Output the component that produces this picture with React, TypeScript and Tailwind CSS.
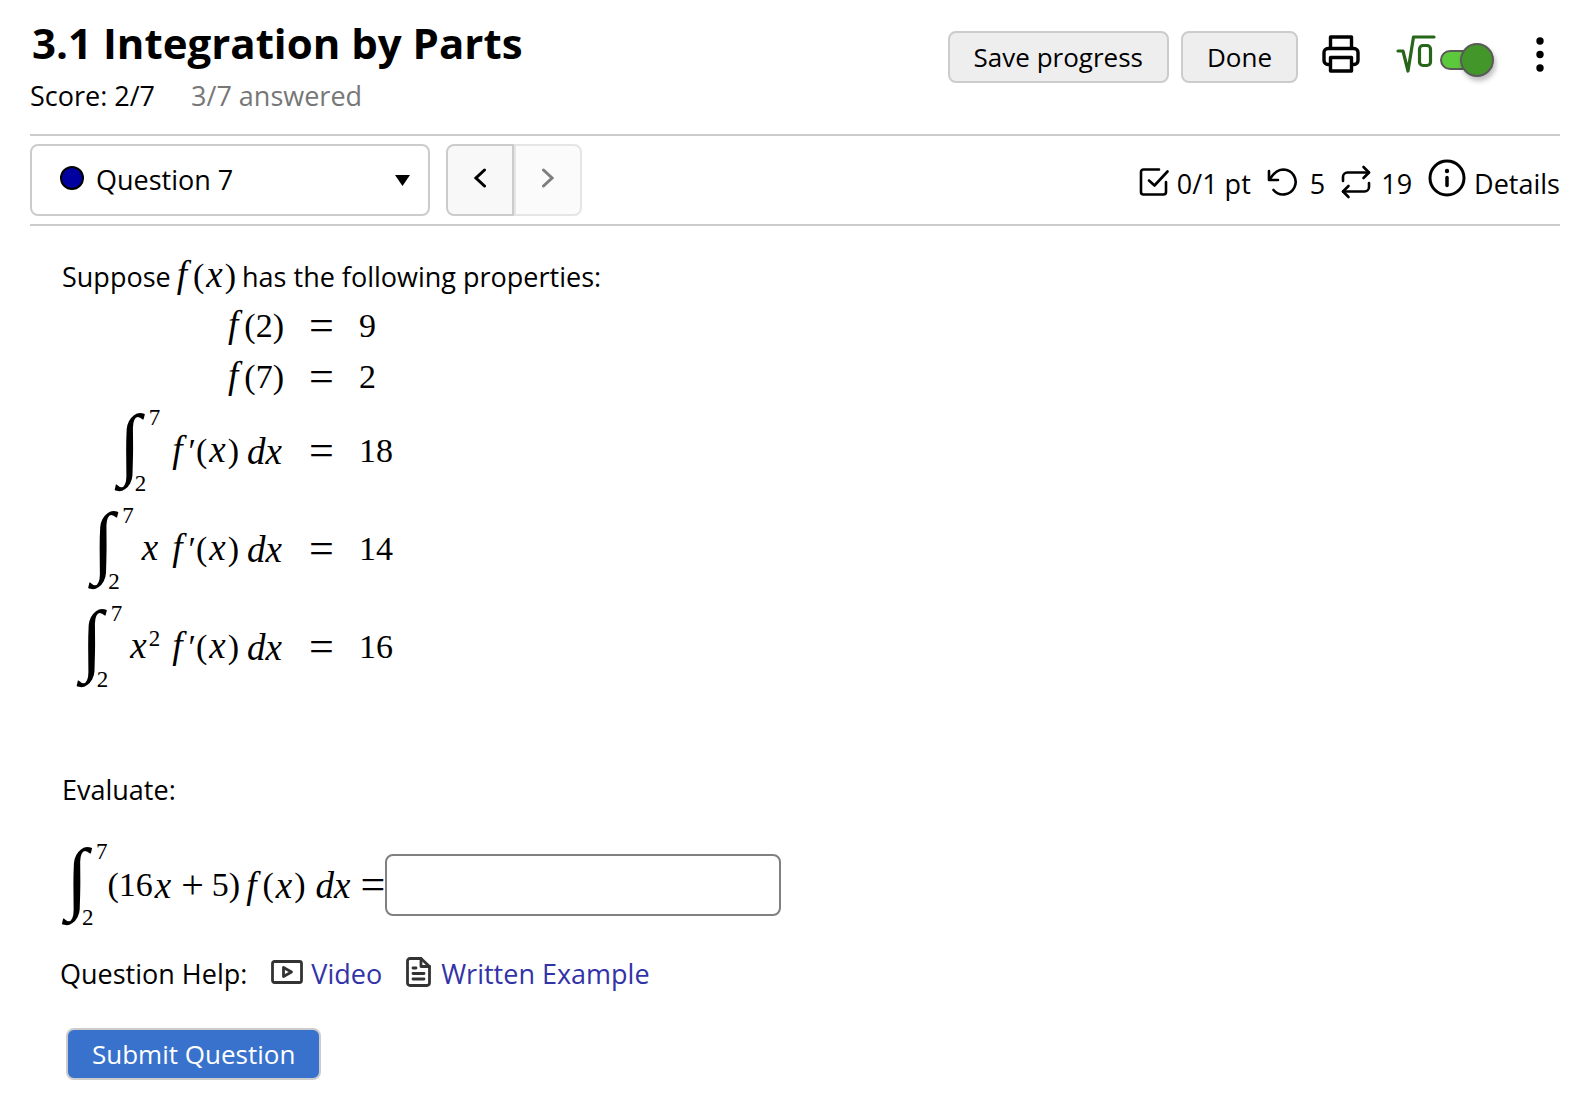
import React, { useState } from "react";

const EQUATIONS = [
  { id: "f2", at: "2", value: "9" },
  { id: "f7", at: "7", value: "2" },
  { id: "int0", factor: "", value: "18" },
  { id: "int1", factor: "x", value: "14" },
  { id: "int2", factor: "x", power: "2", value: "16" },
];

const V = ({ children }: { children: React.ReactNode }) => (
  <i className="px-0.5 text-[37px] leading-none italic">{children}</i>
);

const F = () => <i className="px-1.5 text-[37px] leading-none italic">f</i>;

function Integral({ from, to }: { from: string; to: string }) {
  return (
    <span className="inline-flex h-[90px] items-stretch">
      <span className="w-4 text-[80px] leading-[74px] italic">∫</span>
      <span className="flex flex-col justify-between text-[23px] leading-6">
        <span className="pl-3.5">{to}</span>
        <span>{from}</span>
      </span>
    </span>
  );
}

function PrinterIcon() {
  return (
    <svg width="38" height="38" viewBox="0 0 38 38" fill="none" stroke="currentColor" strokeWidth="3.400" strokeLinejoin="round">
      <path d="M8.500 13.500V2h21v11.500" />
      <path d="M8.500 29.500H6a4 4 0 0 1-4-4v-8a4 4 0 0 1 4-4h26a4 4 0 0 1 4 4v8a4 4 0 0 1-4 4h-2.500" />
      <path d="M8.500 22.500h21V36h-21z" />
    </svg>
  );
}

function RootIcon() {
  return (
    <svg width="40" height="38" viewBox="0 0 40 38" fill="none" stroke="#27661a" strokeWidth="3.200" strokeLinecap="round" strokeLinejoin="round">
      <path d="M2 16h5l5 20 5.500-34H38" />
      <rect x="23.500" y="10.500" width="11" height="20" rx="3.500" />
    </svg>
  );
}

function CheckIcon() {
  return (
    <svg width="30" height="30" viewBox="0 0 30 30" fill="none" stroke="currentColor" strokeWidth="2.600" strokeLinecap="round" strokeLinejoin="round">
      <path d="M20 2.500H4.500A2.500 2.500 0 0 0 2 5v20a2.500 2.500 0 0 0 2.500 2.500h20A2.500 2.500 0 0 0 27 25V15" />
      <path d="M10 13.500l5.500 5L28.500 4.500" />
    </svg>
  );
}

function UndoIcon() {
  return (
    <svg width="31" height="30" viewBox="0 0 31 30" fill="none" stroke="currentColor" strokeWidth="2.600" strokeLinecap="round" strokeLinejoin="round">
      <path d="M2 4v9h9" />
      <path d="M2.500 12.500C6 7 10 2.500 16.500 2.500A12.500 12.500 0 1 1 6.500 23" />
    </svg>
  );
}

function RepeatIcon() {
  return (
    <svg width="30" height="34" viewBox="0 0 30 34" fill="none" stroke="currentColor" strokeWidth="2.600" strokeLinecap="round" strokeLinejoin="round">
      <path d="M2 16v-4a4.500 4.500 0 0 1 4.500-4.500H28" />
      <path d="M22.500 2L28 7.500 22.500 13" />
      <path d="M28 18v4a4.500 4.500 0 0 1-4.500 4.500H2" />
      <path d="M7.500 21L2 26.500 7.500 32" />
    </svg>
  );
}

function InfoIcon() {
  return (
    <svg width="38" height="38" viewBox="0 0 38 38" fill="none" stroke="currentColor" strokeWidth="3" strokeLinecap="round">
      <circle cx="19" cy="19" r="17" />
      <path d="M19 18.500v8" strokeWidth="3.500" />
      <circle cx="19" cy="12" r="2.200" fill="currentColor" stroke="none" />
    </svg>
  );
}

function VideoIcon() {
  return (
    <svg width="32" height="24" viewBox="0 0 32 24" fill="none" stroke="#333" strokeWidth="2.800" strokeLinejoin="round">
      <rect x="1.500" y="1.500" width="29" height="21" rx="2" />
      <path d="M12.500 7.500v9l8-4.500z" />
    </svg>
  );
}

function DocIcon() {
  return (
    <svg width="25" height="30" viewBox="0 0 25 30" fill="none" stroke="#333" strokeWidth="2.800" strokeLinecap="round" strokeLinejoin="round">
      <path d="M15 1.500H4A2.500 2.500 0 0 0 1.500 4v22A2.500 2.500 0 0 0 4 28.500h17a2.500 2.500 0 0 0 2.500-2.500V9.500z" />
      <path d="M15 1.500v8h8.500M7 11h3M7 16.500h11M7 22h11" />
    </svg>
  );
}

export default function App() {
  const [mathOn, setMathOn] = useState(true);
  const [answer, setAnswer] = useState("");

  return (
    <div className="min-h-screen bg-white px-[30px] pt-5 font-['Open_Sans','Noto_Sans',sans-serif] text-[27px] leading-9 text-black">
      <header className="flex items-start justify-between border-b-2 border-[#ccc] pb-[18px]">
        <div>
          <h1 className="pl-0.5 text-[42px] font-bold leading-[46px]">3.1 Integration by Parts</h1>
          <p className="mt-2.5 flex gap-9 leading-10">
            <span>Score: 2/7</span>
            <span className="text-[#777]">3/7 answered</span>
          </p>
        </div>
        <div className="flex items-start gap-3 pt-[11px]">
          <button className="h-[52px] rounded-lg border-2 border-[#ccc] bg-[#eee] px-6 text-[26px]">Save progress</button>
          <button className="h-[52px] rounded-lg border-2 border-[#ccc] bg-[#eee] px-6 text-[26px]">Done</button>
          <button aria-label="Print" className="ml-3 mt-1">
            <PrinterIcon />
          </button>
          <label className="ml-6 mt-1 flex gap-1">
            <RootIcon />
            <span className="relative mt-2 flex h-[34px] w-[54px] items-center">
              <input
                type="checkbox"
                aria-label="Math entry"
                checked={mathOn}
                onChange={(e) => setMathOn(e.target.checked)}
                className="h-5 w-10 appearance-none rounded-full border-2 border-[#5a5a5a] bg-[#5cc83b]"
              />
              <span className="pointer-events-none absolute right-0 top-0 size-[34px] rounded-full border-2 border-[#5a5a5a] bg-[#43962a] shadow-[2px_4px_5px_rgba(0,0,0,0.25)]" />
            </span>
          </label>
          <button aria-label="More options" className="ml-3.5 mt-1.5 px-4">
            <svg width="8" height="36" viewBox="0 0 8 36" fill="currentColor">
              <circle cx="4" cy="4" r="3.700" />
              <circle cx="4" cy="17.500" r="3.700" />
              <circle cx="4" cy="31" r="3.700" />
            </svg>
          </button>
        </div>
      </header>

      <nav className="flex items-center justify-between border-b-2 border-[#ccc] py-2">
        <div className="flex gap-4">
          <div className="relative">
            <select
              aria-label="Question"
              className="h-[72px] w-[400px] appearance-none rounded-lg border-2 border-[#ccc] bg-white pl-16"
            >
              <option>Question 7</option>
            </select>
            <span className="pointer-events-none absolute left-[30px] top-[22px] size-6 rounded-full border-2 border-black bg-[#0000a0]" />
            <svg className="pointer-events-none absolute right-5 top-[31px]" width="15" height="11" viewBox="0 0 15 11">
              <path d="M0 0h15L7.500 11z" />
            </svg>
          </div>
          <div className="flex">
            <button
              aria-label="Previous question"
              className="flex h-[72px] w-[68px] items-center justify-center rounded-l-lg border-2 border-[#ccc] bg-[#f8f8f8] pb-1"
            >
              <svg width="12" height="20" viewBox="0 0 12 20" fill="none" stroke="currentColor" strokeWidth="3" strokeLinecap="round">
                <path d="M10.500 2L2 10l8.500 8" />
              </svg>
            </button>
            <button
              disabled
              aria-label="Next question"
              className="flex h-[72px] w-[68px] items-center justify-center rounded-r-lg border-2 border-[#ccc] bg-[#f8f8f8] pb-1 opacity-50"
            >
              <svg width="12" height="20" viewBox="0 0 12 20" fill="none" stroke="currentColor" strokeWidth="3" strokeLinecap="round">
                <path d="M1.500 2L10 10l-8.500 8" />
              </svg>
            </button>
          </div>
        </div>
        <div className="flex items-center gap-4 pt-2">
          <span className="flex items-center gap-2">
            <span className="pb-1">
              <CheckIcon />
            </span>
            0/1 pt
          </span>
          <span className="flex items-center gap-3">
            <span className="pb-1">
              <UndoIcon />
            </span>
            5
          </span>
          <span className="flex items-center gap-2.5">
            <span className="pb-1">
              <RepeatIcon />
            </span>
            19
          </span>
          <button className="flex items-center gap-2">
            <span className="pb-3">
              <InfoIcon />
            </span>
            Details
          </button>
        </div>
      </nav>

      <main className="px-8 pt-[30px]">
        <p className="h-11 leading-[38px]">
          Suppose
          <span className="pr-1.5 font-['Liberation_Serif',serif] text-[34px]">
            <F />(<V>x</V>)
          </span>
          has the following properties:
        </p>
        <table className="font-['Liberation_Serif',serif] text-[34px] leading-10">
          <tbody>
            {EQUATIONS.map((eq) => (
              <tr key={eq.id} className={eq.at ? "h-[51px]" : "h-[98px]"}>
                <td className="w-[222px] p-0">
                  <span className="flex items-center justify-end gap-1.5 whitespace-nowrap">
                    {eq.at ? (
                      <span>
                        <F />({eq.at})
                      </span>
                    ) : (
                      <>
                        <Integral from="2" to="7" />
                        {eq.factor && (
                          <span>
                            <V>{eq.factor}</V>
                            {eq.power && <sup className="-top-3 text-[23px]">{eq.power}</sup>}
                          </span>
                        )}
                        <span>
                          <F />′(<V>x</V>)
                        </span>
                        <V>dx</V>
                      </>
                    )}
                  </span>
                </td>
                <td className="w-[75px] p-0 text-center text-[44px]">=</td>
                <td className="p-0">{eq.value}</td>
              </tr>
            ))}
          </tbody>
        </table>

        <p className="mt-[76px]">Evaluate:</p>

        <div className="mt-7 flex h-[98px] items-center font-['Liberation_Serif',serif] text-[34px] leading-10">
          <label htmlFor="answer" className="flex items-center gap-2 whitespace-nowrap pl-1">
            <span className="flex items-center">
              <Integral from="2" to="7" />
              (16<V>x</V>
              <span className="px-2 text-[40px]">+</span>
              5)
              <F />(<V>x</V>)
            </span>
            <V>dx</V>
            <span className="text-[44px]">=</span>
          </label>
          <input
            id="answer"
            type="text"
            value={answer}
            onChange={(e) => setAnswer(e.target.value)}
            className="h-[62px] w-[396px] rounded-lg border-2 border-[#808080] px-3"
          />
        </div>

        <div className="-ml-0.5 mt-[22px] flex items-center gap-6">
          <span>Question Help:</span>
          <a href="#video" className="flex items-center gap-2 text-[#3333a8]">
            <span className="pb-1">
              <VideoIcon />
            </span>
            Video
          </a>
          <a href="#example" className="flex items-center gap-2.5 text-[#3333a8]">
            <span className="pb-1">
              <DocIcon />
            </span>
            Written Example
          </a>
        </div>

        <button className="ml-1 mt-9 h-[52px] rounded-lg border-2 border-[#ccc] bg-[#3872cd] px-6 text-[26px] text-white">
          Submit Question
        </button>
      </main>
    </div>
  );
}
